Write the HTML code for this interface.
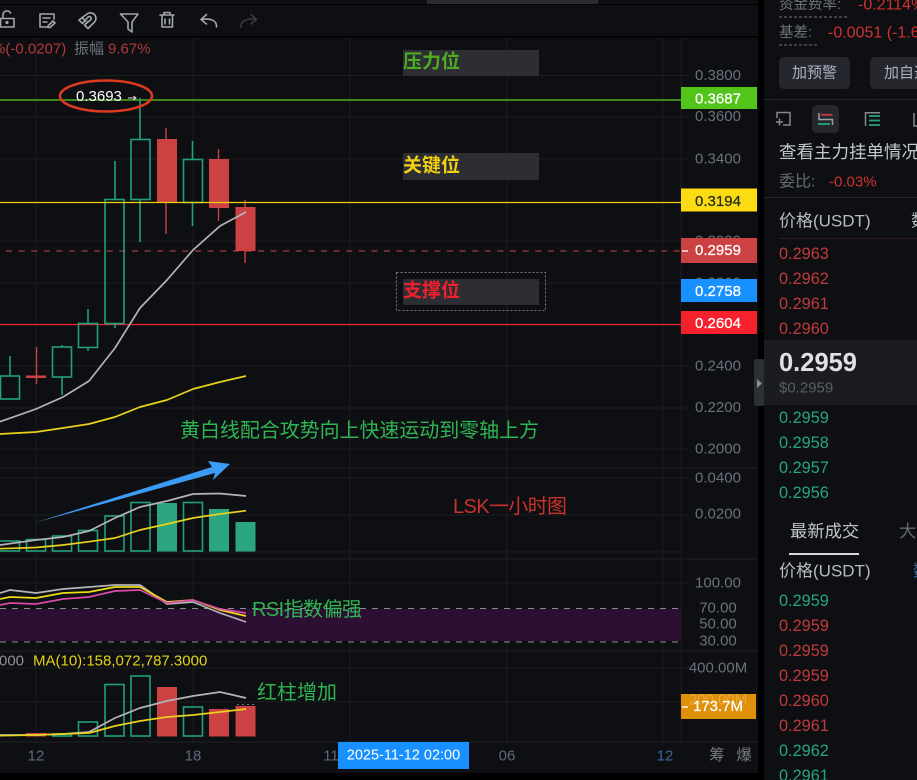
<!DOCTYPE html>
<html><head><meta charset="utf-8">
<style>
html,body{margin:0;padding:0;background:#000;width:917px;height:780px;overflow:hidden}
svg{display:block}
text{font-family:"Liberation Sans","Noto Sans CJK SC",sans-serif;dominant-baseline:central}
.ax{fill:#6b707c;font-size:15px;text-anchor:middle}
.p{font-size:16.3px}
.r{fill:#c23a3a}.g{fill:#27a57d}
.lb{fill:#fff;font-size:15px;text-anchor:middle;stroke:#fff;stroke-width:.25px}
.an{font-size:19px;font-weight:700}
.ann{font-size:20px}
.f{fill:#cc4141}
.gf{fill:#2aa580}
</style></head>
<body>
<svg width="917" height="780" viewBox="0 0 917 780" xmlns="http://www.w3.org/2000/svg">
<rect width="917" height="780" fill="#000"/>
<!-- chart bg -->
<rect x="0" y="0" width="758" height="773" fill="#0e0f12"/>
<rect x="427" y="0" width="171" height="4" fill="#2a2c31"/>
<rect x="0" y="4" width="758" height="1" fill="#000"/>
<rect x="0" y="36" width="758" height="1.5" fill="#000"/>
<!-- grid -->
<g stroke="#1c1d21" stroke-width="1" fill="none">
<path d="M36 38V742M193 38V742M350 38V742M507 38V742M663 38V742M681 38V742"/>
<path d="M0 75.5H688M0 117H688M0 159H688M0 241H688M0 283H688M0 325H688M0 366H688M0 408H688M0 449H688M0 478H688M0 515H688M0 552H681M0 583H688M0 668H688M0 702H688"/>
<path d="M0 468H758M0 559H758M0 651H758M0 742H758" stroke="#1f2024"/>
</g>
<rect x="0" y="773" width="758" height="7" fill="#000"/>

<!-- toolbar icons -->
<g fill="none" stroke="#a3a6ac" stroke-width="1.6" stroke-linejoin="round" stroke-linecap="round">
<path d="M0.500 18.500H14V27H0.500ZM3 18V14.500A4 4 0 0 1 10.500 13"/><circle cx="7" cy="22.500" r=".8"/>
<path d="M47 27H40V14H54V19M43 18H50M43 22H47M48 26L53 21L55 23L50 27.500H48Z"/>
<path d="M79 20L87 14A5.500 5.500 0 0 1 94.500 22L88 28.500L84.500 25L91 19.500A2 2 0 0 0 88 17L82.500 23.500ZM82 17.500L85.500 21M85 24.500L88 21.500"/>
<path d="M120.500 14H138L132 22V32L128 29V22Z"/>
<path d="M160 15H174M164 15V12.500H170V15M162 15V27H172.500V15M165 19V24M169.500 19V24"/>
<path d="M216.500 27C217 20 210 18 201 19.500M201 19.500L206.500 14.500M201 19.500L206.500 24"/>
<path d="M241 27C240.500 20 248 18 256.500 19.500M256.500 19.500L251 14.500M256.500 19.500L251 24" stroke="#3a3c41"/>
</g>
<text x="-8" y="49" font-size="15" fill="#b23a3a">%(-0.0207)</text>
<text x="74" y="49" font-size="15" fill="#6e7079">振幅</text>
<text x="108" y="49" font-size="15" fill="#b23a3a">9.67%</text>

<!-- annotation boxes -->
<rect x="403" y="50" width="136" height="26" fill="#2c2e33"/>
<rect x="403" y="153" width="136" height="27" fill="#2c2e33"/>
<rect x="403" y="279" width="136" height="26" fill="#2c2e33"/>
<rect x="396.500" y="272.500" width="149" height="38" fill="none" stroke="#7b7d85" stroke-width="1" stroke-dasharray="2 2"/>
<text x="403" y="62" class="an" fill="#4eab20">压力位</text>
<text x="403" y="166" class="an" fill="#f2d012">关键位</text>
<text x="403" y="291" class="an" fill="#f0202c">支撑位</text>

<!-- horizontal levels -->
<path d="M0 100H681" stroke="#4fae1e" stroke-width="1.400"/>
<path d="M0 324.500H681" stroke="#f0202c" stroke-width="1.300"/>
<path d="M6 251H681" stroke="#a03c3c" stroke-width="1.300" stroke-dasharray="6 6.600"/>

<!-- candles -->
<g stroke="#21a07b" stroke-width="1.600" fill="none">
<path d="M10 356V376M10 399V400"/><rect x="0.500" y="376" width="19" height="23"/>
<path d="M62 345V347M62 377V395"/><rect x="52.500" y="347" width="19" height="30"/>
<path d="M88 309V323M88 347V351"/><rect x="78.500" y="323.500" width="19" height="24"/>
<path d="M115 161V199M115 323V328"/><rect x="105" y="199.500" width="19" height="124"/>
<path d="M140 98V139M140 200V242"/><rect x="131" y="139.500" width="19" height="60"/>
<path d="M192.500 141V159M192.500 202V226"/><rect x="183.500" y="159.500" width="19" height="43"/>
</g>
<g stroke="#cc4141" stroke-width="1.400">
<path d="M36.500 347V384"/><path d="M26 376.700H46" stroke-width="2.500"/>
<path d="M166 128V234"/>
<path d="M218.500 149V221"/>
<path d="M245 200V263"/>
</g>
<rect x="157" y="139" width="20" height="63" class="f"/>
<rect x="209" y="159" width="20" height="49" class="f"/>
<rect x="235.500" y="207" width="20" height="44" class="f"/>
<path d="M0 202.500H681" stroke="#f0d012" stroke-width="1.300"/>

<!-- MA lines -->
<g fill="none" stroke-width="1.700" stroke-linejoin="round">
<path d="M0 421.700L36 409L63 397L89 381L115 348L140 308L167 280L193 250L220 226L246 212" stroke="#b4b4b8"/>
<path d="M0 434L36 432L63 428L89 424L115 417L140 407L167 400L193 389L220 382L246 376" stroke="#e8d21c"/>
</g>

<!-- ellipse + high -->
<ellipse cx="106" cy="96" rx="46" ry="15.500" fill="none" stroke="#dd3a1e" stroke-width="2.500"/>
<text x="76" y="96.500" font-size="15" fill="#fff">0.3693</text>
<path d="M128 98H136M133.500 96L136 98L133.500 100" fill="none" stroke="#e0e0e0" stroke-width="1"/>

<!-- MACD -->
<g stroke="#21a07b" stroke-width="1.600" fill="none">
<rect x="-5" y="541" width="24.500" height="10"/>
<rect x="26.500" y="539.500" width="19" height="11.500"/>
<rect x="52.500" y="536" width="19" height="15"/>
<rect x="78.500" y="530.500" width="19" height="20.500"/>
<rect x="105" y="516" width="19" height="35"/>
<rect x="131" y="502.500" width="19" height="48.500"/>
<rect x="183.500" y="502.500" width="19" height="48.500"/>
</g>
<rect x="157" y="503" width="20" height="48.500" class="gf"/>
<rect x="209" y="509" width="20" height="42.500" class="gf"/>
<rect x="235.500" y="522" width="20" height="29.500" class="gf"/>
<g fill="none" stroke-width="1.700" stroke-linejoin="round">
<path d="M0 545L36 540L63 537L89 531L115 518L140 507L167 501L193 494L220 493.500L246 496" stroke="#b4b4b8"/>
<path d="M0 548.700L36 547.500L63 545L89 541.700L115 538L140 530L167 524L193 518L220 514L246 510.700" stroke="#e8d21c"/>
</g>
<polygon points="34,523 212,467 208,461 230,464 213,480 215,473" fill="#3b9cf5"/>

<!-- RSI -->
<rect x="0" y="609" width="681" height="32" fill="#2d0f33"/>
<path d="M0 608.500H681M0 642H681" stroke="#8a8a90" stroke-width="1" stroke-dasharray="6 6" fill="none"/>
<g fill="none" stroke-width="1.700" stroke-linejoin="round">
<path d="M0 593L10 590L36 593L63 589L89 587L115 585L140 585L167 604L193 602L220 613L246 622" stroke="#b4b4b8"/>
<path d="M0 599L10 597L36 598L63 593L89 592L115 587L140 587L167 602L193 600L220 610L246 616" stroke="#ecdc14"/>
<path d="M0 605L10 603L36 604L63 599L89 597L115 591L140 590L167 603L193 600L220 609L246 613" stroke="#d84aa6"/>
</g>

<!-- volume -->
<text x="-1" y="661" font-size="15" fill="#8f9197">000</text>
<text x="33" y="661" font-size="15" fill="#e3d118">MA(10):158,072,787.3000</text>
<rect x="26" y="733" width="20" height="3.500" class="f"/>
<g stroke="#21a07b" stroke-width="1.600" fill="none">
<rect x="52.500" y="734" width="19" height="2"/>
<rect x="78.500" y="722" width="19" height="14"/>
<rect x="105" y="684.500" width="19" height="51.500"/>
<rect x="131" y="676" width="19" height="60"/>
<rect x="183.500" y="707" width="19" height="29"/>
</g>
<rect x="157" y="687" width="20" height="49.500" class="f"/>
<rect x="209" y="709" width="20" height="27.500" class="f"/>
<rect x="235.500" y="706" width="20" height="30.500" class="f"/>
<path d="M237 704.500H255" stroke="#6f7076" stroke-dasharray="2 3"/>
<g fill="none" stroke-width="1.700" stroke-linejoin="round">
<path d="M0 735L36 735L63 734L89 732L115 718L140 708L167 701L193 696L220 692L246 698" stroke="#b4b4b8"/>
<path d="M0 735.700L36 735L63 734L89 733L115 726L140 721L167 717L193 715L220 712L246 709" stroke="#e8d21c"/>
</g>

<!-- annotations text -->
<text x="180" y="431" class="ann" fill="#2fb552" textLength="359">黄白线配合攻势向上快速运动到零轴上方</text>
<text x="453" y="507" class="ann" fill="#c9322a" textLength="114">LSK一小时图</text>
<text x="252" y="610" class="ann" fill="#2fb552" textLength="110">RSI指数偏强</text>
<text x="257" y="693" class="ann" fill="#2fb552">红柱增加</text>

<!-- axis -->
<text x="718" y="75.500" class="ax">0.3800</text>
<text x="718" y="116.500" class="ax">0.3600</text>
<text x="718" y="159" class="ax">0.3400</text>
<text x="718" y="241" class="ax">0.3000</text>
<text x="718" y="283" class="ax">0.2800</text>
<text x="718" y="366" class="ax">0.2400</text>
<text x="718" y="407.500" class="ax">0.2200</text>
<text x="718" y="449" class="ax">0.2000</text>
<text x="718" y="478" class="ax">0.0400</text>
<text x="718" y="514" class="ax">0.0200</text>
<text x="718" y="583" class="ax">100.00</text>
<text x="718" y="608" class="ax">70.00</text>
<text x="718" y="624" class="ax">50.00</text>
<text x="718" y="641" class="ax">30.00</text>
<text x="718" y="668" class="ax">400.00M</text>

<rect x="681" y="87" width="76" height="22" fill="#52c41a"/>
<text x="718" y="99" class="lb">0.3687</text>
<rect x="681" y="188.500" width="76" height="23" fill="#fadb14"/>
<text x="718" y="201.500" class="lb" style="fill:#2a2a1a;stroke:#2a2a1a">0.3194</text>
<rect x="681" y="238" width="76" height="25" fill="#cc4141"/>
<text x="718" y="250.500" class="lb">0.2959</text>
<path d="M682 251H688" stroke="#fff" stroke-width="1.300"/>
<rect x="681" y="279" width="76" height="23" fill="#1890ff"/>
<text x="718" y="291.500" class="lb">0.2758</text>
<rect x="681" y="311" width="76" height="23" fill="#f5222d"/>
<text x="718" y="323.500" class="lb">0.2604</text>
<rect x="681" y="694" width="75" height="25" fill="#dd9008"/>
<text x="718" y="700" class="ax" style="fill:#e9a93a">200.00M</text>
<text x="718" y="706.500" class="lb">173.7M</text>
<path d="M682 707H688" stroke="#fff" stroke-width="1.300"/>

<!-- x axis -->
<text x="36" y="756" class="ax" style="fill:#5f6a7c">12</text>
<text x="193" y="756" class="ax" style="fill:#5f6a7c">18</text>
<text x="331" y="756" class="ax" style="fill:#5f6a7c">11</text>
<text x="507" y="756" class="ax" style="fill:#5f6a7c">06</text>
<text x="665" y="756" class="ax" style="fill:#3f6a98">12</text>
<rect x="338" y="742" width="131" height="27" fill="#1890ff"/>
<text x="403.500" y="755.500" font-size="14.500" fill="#fff" text-anchor="middle">2025-11-12 02:00</text>
<text x="717" y="755.500" font-size="15.500" fill="#777a80" text-anchor="middle">筹</text>
<text x="744" y="755.500" font-size="15.500" fill="#777a80" text-anchor="middle">爆</text>

<!-- right panel -->
<rect x="764" y="0" width="153" height="780" fill="#0d0f12"/>
<text x="779" y="5" font-size="14.500" fill="#70737b">资金费率:</text>
<text x="858" y="5" font-size="16" fill="#d0332f">-0.2114%</text>
<path d="M779 17H847" stroke="#70737b" stroke-dasharray="3 2"/>
<text x="779" y="33" font-size="14.500" fill="#70737b">基差:</text>
<text x="828" y="33" font-size="16" fill="#d0332f">-0.0051 (-1.69%)</text>
<path d="M779 45H817" stroke="#70737b" stroke-dasharray="3 2"/>
<rect x="779" y="57" width="71" height="32" rx="5" fill="#25272d"/>
<rect x="870" y="57" width="60" height="32" rx="5" fill="#25272d"/>
<text x="792" y="73" font-size="15" fill="#a9b3c4">加预警</text>
<text x="884" y="73" font-size="15" fill="#a9b3c4">加自选</text>
<rect x="764" y="99" width="153" height="1" fill="#25272b"/>
<!-- tab icons -->
<rect x="812" y="105" width="27" height="28" rx="5" fill="#25272d"/>
<g fill="none" stroke-width="1.500">
<path d="M777 118V112.500H790V125H783M776 122H783M779.500 118.500V125.500" stroke="#858890"/>
<path d="M819 113V119.500H832.500V125" stroke="#9b9ea5"/>
<path d="M821 114.800H832.500" stroke="#c23a3a" stroke-width="1.800"/>
<path d="M818 124H830" stroke="#27a57d" stroke-width="1.800"/>
<path d="M880 112.800H865.500V126" stroke="#858890"/>
<path d="M869 116H880M869 120.500H880M869 125H880" stroke="#27a57d" stroke-width="1.800"/>
<path d="M914 113V126H917" stroke="#858890"/>
</g>
<text x="779" y="152" font-size="17.500" fill="#c4c7cc">查看主力挂单情况</text>
<text x="779" y="182" font-size="16" fill="#686b73">委比:</text>
<text x="829" y="182" font-size="15" fill="#d0332f">-0.03%</text>
<rect x="764" y="197" width="153" height="1" fill="#25272b"/>
<text x="779" y="221" font-size="17" fill="#b8bbc1">价格(USDT)</text>
<text x="911" y="221" font-size="17" fill="#b8bbc1">数</text>
<rect x="779" y="238" width="138" height="1" fill="#2c1a1c"/>
<text x="779" y="254" class="p r">0.2963</text>
<text x="779" y="279" class="p r">0.2962</text>
<text x="779" y="304" class="p r">0.2961</text>
<text x="779" y="329" class="p r">0.2960</text>
<rect x="764" y="340" width="153" height="65" fill="#1a1c21"/>
<text x="779" y="363" font-size="25.500" font-weight="700" fill="#dfe1e4">0.2959</text>
<text x="779" y="388" font-size="15" fill="#5a5d64">$0.2959</text>
<rect x="754" y="359" width="10" height="47" rx="2" fill="#2c2f35"/>
<polygon points="757,379 757,388 762,383.500" fill="#8a8d94"/>
<text x="779" y="418" class="p g">0.2959</text>
<text x="779" y="443" class="p g">0.2958</text>
<text x="779" y="468" class="p g">0.2957</text>
<text x="779" y="493" class="p g">0.2956</text>
<text x="790" y="531" font-size="17.300" fill="#c0c3c8">最新成交</text>
<text x="899" y="531" font-size="17.300" fill="#64676e">大</text>
<rect x="789" y="553" width="70" height="2" fill="#d8d9dc"/>
<text x="779" y="571" font-size="17" fill="#b8bbc1">价格(USDT)</text>
<text x="913" y="571" font-size="17" fill="#3a6ea8">数</text>
<text x="779" y="601" class="p g">0.2959</text>
<text x="779" y="626" class="p r">0.2959</text>
<text x="779" y="651" class="p r">0.2959</text>
<text x="779" y="676" class="p r">0.2959</text>
<text x="779" y="701" class="p r">0.2960</text>
<text x="779" y="726" class="p r">0.2961</text>
<text x="779" y="751" class="p g">0.2962</text>
<text x="779" y="776" class="p g">0.2961</text>
</svg>
</body></html>
